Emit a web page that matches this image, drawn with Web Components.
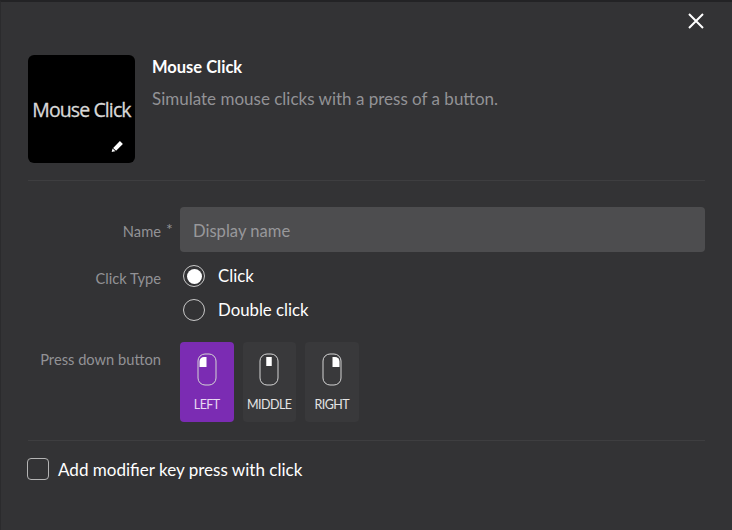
<!DOCTYPE html>
<html>
<head>
<meta charset="utf-8">
<title>Mouse Click</title>
<style>
  html, body { margin: 0; height: 100%; background: #333335; }
  body { font-family: Lato, "Noto Sans", sans-serif; color: #fff; overflow: hidden; }
</style>
</head>
<body>
<action-dialog>
  <action-header slot="header" title="Mouse Click" description="Simulate mouse clicks with a press of a button." tile="Mouse Click"></action-header>

  <form-row label="Name" required>
    <text-field placeholder="Display name"></text-field>
  </form-row>
  <form-row label="Click Type" class="radios">
    <div style="display:flex;flex-direction:column;gap:12px;padding:0 0 0 3px">
      <radio-option checked>Click</radio-option>
      <radio-option>Double click</radio-option>
    </div>
  </form-row>
  <form-row label="Press down button" class="buttons">
    <div style="display:flex;gap:9px">
      <mouse-button side="left" active>LEFT</mouse-button>
      <mouse-button side="middle">MIDDLE</mouse-button>
      <mouse-button side="right">RIGHT</mouse-button>
    </div>
  </form-row>

  <check-option slot="footer">Add modifier key press with click</check-option>
</action-dialog>

<script>
class ActionDialog extends HTMLElement {
  constructor() {
    super();
    this.attachShadow({ mode: 'open' });
  }

  connectedCallback() {
    this.shadowRoot.innerHTML = `
      <style>
        :host {
          display: block;
          box-sizing: border-box;
          width: 732px;
          height: 530px;
          background: #333335;
          border-top: 2px solid #232325;
          border-left: 1px solid #2b2b2d;
          padding: 0 27px 0 27px;
          position: relative;
        }
        .close {
          position: absolute;
          top: 10px;
          right: 27px;
          width: 18px;
          height: 18px;
          padding: 0;
          background: none;
          border: 0;
        }
        .close svg { display: block; }
        hr { border: 0; height: 1px; margin: 0; background: #3e3e40; }
        .form { display: flex; flex-direction: column; padding-top: 26px; }
        .footer { padding-top: 18px; }
      </style>
      <button class="close" aria-label="Close">
        <svg width="18" height="18" viewBox="0 0 18 18" fill="none" stroke="#fff" stroke-width="2"><path d="M2 2l14 14M16 2L2 16"/></svg>
      </button>
      <slot name="header"></slot>
      <hr>
      <div class="form"><slot></slot></div>
      <hr>
      <div class="footer"><slot name="footer"></slot></div>
    `;
  }
}

class ActionHeader extends HTMLElement {
  constructor() {
    super();
    this.attachShadow({ mode: 'open' });
  }

  connectedCallback() {
    this.shadowRoot.innerHTML = `
      <style>
        :host { display: flex; gap: 17px; padding: 53px 0 17px; }
        .tile {
          position: relative;
          box-sizing: border-box;
          width: 107px;
          height: 108px;
          padding-top: 2px;
          background: #000;
          border-radius: 6px;
          display: flex;
          align-items: center;
          justify-content: center;
          flex: none;
        }
        .tile span {
          font: 19.5px/1 "Open Sans", sans-serif;
          letter-spacing: -0.9px;
          color: #d8d8d8;
          white-space: nowrap;
          -webkit-text-stroke: 0.3px #d8d8d8;
        }
        .tile svg { position: absolute; right: 11px; bottom: 10px; }
        h1 { margin: 2px 0 0; font: 700 16.5px/20px Lato, sans-serif; color: #fff; }
        p { margin: 12px 0 0; font: 17px/20px Lato, sans-serif; color: #929295; }
      </style>
      <div class="tile">
        <span>${this.getAttribute('tile')}</span>
        <svg width="13" height="13" viewBox="0 0 14 14" fill="#fff"><path d="M9.6 1.2l3.2 3.2-7.3 7.3-3.2-3.2zM1.7 9.2l3 3-3.1.5-.4.3-.6-.6.3-.4z"/></svg>
      </div>
      <div>
        <h1>${this.getAttribute('title')}</h1>
        <p>${this.getAttribute('description')}</p>
      </div>
    `;
  }
}

class FormRow extends HTMLElement {
  constructor() {
    super();
    this.attachShadow({ mode: 'open' });
  }

  connectedCallback() {
    const star = this.hasAttribute('required') ? '<span class="star">*</span>' : '';
    this.shadowRoot.innerHTML = `
      <style>
        :host { display: grid; grid-template-columns: 133px 1fr; column-gap: 19px; }
        :host(.radios) { margin-top: 13px; }
        :host(.buttons) { margin-top: 21px; padding-bottom: 18px; }
        label {
          position: relative;
          font: 14.7px/20px Lato, sans-serif;
          color: #929295;
          text-align: right;
          white-space: nowrap;
          padding-top: 14px;
        }
        :host(.radios) label { padding-top: 3px; }
        :host(.buttons) label { padding-top: 7px; }
        .star { position: absolute; left: 100%; top: 12px; margin-left: 5px; font-size: 16px; }
      </style>
      <label>${this.getAttribute('label')}${star}</label>
      <div><slot></slot></div>
    `;
  }
}

class TextField extends HTMLElement {
  constructor() {
    super();
    this.attachShadow({ mode: 'open' });
  }

  connectedCallback() {
    this.shadowRoot.innerHTML = `
      <style>
        :host { display: block; }
        input {
          display: block;
          box-sizing: border-box;
          width: 100%;
          height: 45px;
          border: 0;
          border-radius: 4px;
          background: #4d4d4f;
          padding: 2px 13px 0;
          font: 16.6px Lato, sans-serif;
          color: #fff;
          outline: none;
        }
        input::placeholder { color: #98989b; opacity: 1; }
      </style>
      <input placeholder="${this.getAttribute('placeholder')}">
    `;
  }
}

class RadioOption extends HTMLElement {
  constructor() {
    super();
    this.attachShadow({ mode: 'open' });
  }

  connectedCallback() {
    this.shadowRoot.innerHTML = `
      <style>
        :host { display: flex; align-items: center; gap: 13px; font: 16.8px/22px Lato, sans-serif; color: #fff; }
        .ring {
          box-sizing: border-box;
          width: 22px;
          height: 22px;
          border: 1.5px solid #c8c8c8;
          border-radius: 50%;
          display: grid;
          place-items: center;
        }
        :host([checked]) .ring::after {
          content: '';
          width: 15px;
          height: 15px;
          border-radius: 50%;
          background: #fff;
        }
      </style>
      <span class="ring"></span>
      <slot></slot>
    `;
  }
}

class MouseButton extends HTMLElement {
  static wheel = {
    left: 'M9.5 4H7a4.5 4.5 0 0 0-4.5 4.5V14h7z',
    middle: 'M7.25 4h5.5v9h-5.5z',
    right: 'M10.5 4H13a4.5 4.5 0 0 1 4.5 4.5V14h-7z'
  };

  constructor() {
    super();
    this.attachShadow({ mode: 'open' });
  }

  connectedCallback() {
    const side = this.getAttribute('side');
    this.shadowRoot.innerHTML = `
      <style>
        :host {
          box-sizing: border-box;
          display: flex;
          flex-direction: column;
          align-items: center;
          width: 53.5px;
          height: 80px;
          padding-top: 11px;
          border-radius: 4px;
          background: #39393b;
          font: 12.5px/16px Lato, sans-serif;
          letter-spacing: -0.55px;
          color: #e4e4e4;
        }
        :host([active]) { background: #7b2cb3; color: #e8d8f2; }
        svg { display: block; margin-bottom: 11px; }
      </style>
      <svg width="20" height="33" viewBox="0 0 20 33" fill="none">
        <rect x="1" y="1" width="18" height="31" rx="7" stroke="#d4d4d4" stroke-width="1"/>
        <path d="${MouseButton.wheel[side]}" fill="#fff"/>
      </svg>
      <slot></slot>
    `;
  }
}

class CheckOption extends HTMLElement {
  constructor() {
    super();
    this.attachShadow({ mode: 'open' });
  }

  connectedCallback() {
    this.shadowRoot.innerHTML = `
      <style>
        :host { display: flex; align-items: center; gap: 9px; font: 17.05px/22px Lato, sans-serif; color: #fff; }
        .box {
          box-sizing: border-box;
          width: 22px;
          height: 22px;
          margin: -2px 0 0 -1px;
          border: 1.5px solid #b4b4b4;
          border-radius: 4px;
        }
      </style>
      <span class="box"></span>
      <slot></slot>
    `;
  }
}

customElements.define('action-dialog', ActionDialog);
customElements.define('action-header', ActionHeader);
customElements.define('form-row', FormRow);
customElements.define('text-field', TextField);
customElements.define('radio-option', RadioOption);
customElements.define('mouse-button', MouseButton);
customElements.define('check-option', CheckOption);
</script>
</body>
</html>
